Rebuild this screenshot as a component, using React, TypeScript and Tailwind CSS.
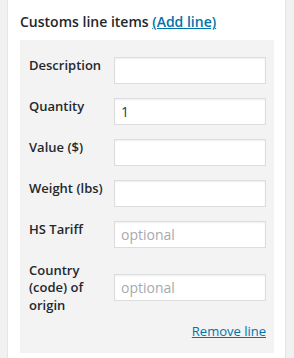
import React, { useState } from 'react';

type Field = {
  label: string;
  value?: string;
  placeholder?: string;
};

const fields: Field[] = [
  { label: 'Description', value: '' },
  { label: 'Quantity', value: '1' },
  { label: 'Value ($)', value: '' },
  { label: 'Weight (lbs)', value: '' },
  { label: 'HS Tariff', placeholder: 'optional' },
  { label: 'Country (code) of origin', placeholder: 'optional' },
];

const FieldRow: React.FC<{ field: Field; last?: boolean }> = ({ field, last }) => {
  const [value, setValue] = useState(field.value ?? '');

  return (
    <div className={`flex ${last ? 'items-center' : 'items-start'}`}>
      <label className="w-[85px] shrink-0 pr-[10px] text-[13px] leading-[17.5px] font-semibold text-[#23282d]">
        {field.label}
      </label>
      <input
        type="text"
        value={value}
        onChange={(e) => setValue(e.target.value)}
        placeholder={field.placeholder}
        className="h-[27px] w-[152px] border border-[#dddddd] bg-white px-[6px] text-[14px] text-[#32373c] shadow-[inset_0_1px_2px_rgba(0,0,0,0.07)] outline-none placeholder:text-[#a7aaad]"
      />
    </div>
  );
};

export default function App() {
  return (
    <div
      className="min-h-[358px] bg-[#f1f1f1] pl-[7px]"
      style={{ fontFamily: '"Open Sans", "Liberation Sans", sans-serif' }}
    >
      <div className="min-h-[358px] w-[279px] border-x border-[#e5e5e5] bg-white pl-[12px] pr-[11px] pt-[12px]">
        <h3 className="text-[14px] leading-[19.6px] font-semibold text-[#23282d]">
          Customs line items{' '}
          <a href="#" className="text-[#0073aa] underline">
            (Add line)
          </a>
        </h3>

        {/* Line item box */}
        <div className="mt-[8px] bg-[#f3f3f3] pl-[9px] pr-[8px] pt-[17px] pb-[12px]">
          <div className="flex flex-col gap-[14px]">
            {fields.map((f, i) => (
              <FieldRow key={f.label} field={f} last={i === fields.length - 1} />
            ))}
          </div>
          <div className="mt-[9px] text-right text-[13px] leading-[17.5px]">
            <a href="#" className="text-[#0073aa] underline">
              Remove line
            </a>
          </div>
        </div>
      </div>
    </div>
  );
}
